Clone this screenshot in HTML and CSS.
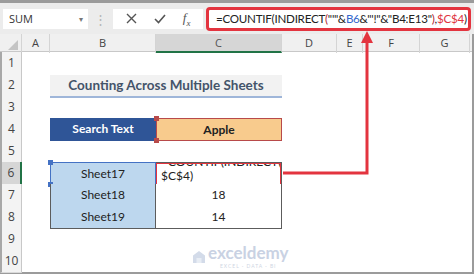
FILE: index.html
```html
<!DOCTYPE html>
<html lang="en">
<head>
    <meta charset="UTF-8">
    <meta name="viewport" content="width=device-width, initial-scale=1.0">
    <title>Counting Across Multiple Sheets</title>
    <link rel="stylesheet" href="styles.css">
</head>
<body>
    <div class="app">
        <div class="topstrip"></div>
        <div class="fbar">
            <div class="namebox">
                <span>SUM</span>
                <span class="caret">&#9662;</span>
            </div>
            <div class="dots">&#8942;</div>
            <div class="fbuttons">
                <svg width="11" height="11" viewBox="0 0 11 11"><path d="M1 1 L10 10 M10 1 L1 10" stroke="#555" stroke-width="1.4" fill="none"/></svg>
                <svg width="12" height="10" viewBox="0 0 12 10"><path d="M1 5 L4.5 8.5 L11 1" stroke="#555" stroke-width="1.6" fill="none"/></svg>
                <span class="fx"><i>f</i><sub>x</sub></span>
            </div>
            <div class="formula">=COUNTIF(INDIRECT<span class="paren">(</span>"'"&amp;<span class="ref-b">B6</span>&amp;"'!"&amp;"B4:E13"<span class="paren">)</span>,<span class="ref-c">$C$4</span>)</div>
        </div>

        <div class="sheet">
            <div class="row colheads">
                <div class="corner"><span class="tri"></span></div>
                <div class="ch">A</div>
                <div class="ch">B</div>
                <div class="ch active">C</div>
                <div class="ch">D</div>
                <div class="ch">E</div>
                <div class="ch">F</div>
                <div class="ch">G</div>
            </div>

            <div class="row"><div class="rh">1</div></div>
            <div class="row">
                <div class="rh">2</div>
                <div></div>
                <div class="title">Counting Across Multiple Sheets</div>
            </div>
            <div class="row"><div class="rh">3</div></div>
            <div class="row">
                <div class="rh">4</div>
                <div></div>
                <div class="cell search">Search Text</div>
                <div class="cell apple">Apple</div>
            </div>
            <div class="row"><div class="rh">5</div></div>
            <div class="row">
                <div class="rh active">6</div>
                <div></div>
                <div class="cell sheetname first picked">Sheet17</div>
                <div class="cell num first formula-cell">
                    <span class="wrapped">=COUNTIF(INDIRECT("'"&amp;B6&amp;"'!"&amp;"B4:E13"),</span>
                    <span class="tail">$C$4)</span>
                </div>
            </div>
            <div class="row">
                <div class="rh">7</div>
                <div></div>
                <div class="cell sheetname">Sheet18</div>
                <div class="cell num">18</div>
            </div>
            <div class="row">
                <div class="rh">8</div>
                <div></div>
                <div class="cell sheetname">Sheet19</div>
                <div class="cell num">14</div>
            </div>
            <div class="row"><div class="rh">9</div></div>
            <div class="row"><div class="rh">10</div></div>

            <div class="watermark">
                <svg width="14" height="14" viewBox="0 0 14 14"><path d="M7 1 L13 5.5 L13 13 L1 13 L1 5.5 Z" fill="#d3dbe9"/><path d="M4.5 13 L4.5 8 L9.5 8 L9.5 13 Z" fill="#e8edf4"/></svg>
                <div>
                    <div class="wm-name">exceldemy</div>
                    <div class="wm-sub">EXCEL · DATA · BI</div>
                </div>
            </div>
        </div>

        <svg class="arrow" width="474" height="274" viewBox="0 0 474 274">
            <path d="M283 173 L367 173 L367 40" stroke="#e3343f" stroke-width="3" fill="none"/>
            <path d="M367 31 L361 43 L373 43 Z" fill="#e3343f"/>
        </svg>
    </div>
</body>
</html>
```

FILE: styles.css
```css
body {
    margin: 0;
    padding: 0;
    font-family: Lato, "Open Sans", sans-serif;
}
.app {
    position: relative;
    width: 474px;
    height: 274px;
    overflow: hidden;
    background: #e8e8e8;
}
.topstrip {
    height: 3px;
    background: #9b9b9b;
}
.fbar {
    height: 31px;
    display: flex;
    align-items: center;
    padding-left: 3px;
    background: #ececec;
}
.namebox {
    width: 85px;
    height: 20px;
    box-sizing: border-box;
    background: white;
    display: flex;
    align-items: center;
    justify-content: space-between;
    padding: 0 5px 0 6px;
    font-family: "Open Sans", sans-serif;
    font-size: 11px;
    color: #333;
}
.caret {
    font-size: 8px;
    color: #777;
}
.dots {
    width: 25px;
    text-align: center;
    color: #b5b5b5;
    font-size: 13px;
}
.fbuttons {
    width: 90px;
    height: 20px;
    background: white;
    display: flex;
    align-items: center;
    justify-content: space-around;
    padding: 0 4px;
    box-sizing: border-box;
}
.fx {
    font-family: "Liberation Serif", serif;
    font-size: 13px;
    color: #555;
}
.fx sub {
    font-size: 9px;
    font-style: italic;
}
.formula {
    margin-left: 3px;
    width: 265px;
    height: 24px;
    box-sizing: border-box;
    border: 3px solid #e3343f;
    border-radius: 4px;
    background: white;
    padding-left: 7px;
    font-size: 11.6px;
    letter-spacing: -0.25px;
    line-height: 18px;
    white-space: nowrap;
    overflow: hidden;
    color: #222;
}
.paren { color: #b3262e; }
.ref-b { color: #3366cc; }
.ref-c { color: #e0343f; }

.sheet {
    position: relative;
    background: white;
    height: 238px;
    border-right: 2px solid #9b9b9b;
    border-bottom: 2px solid #9b9b9b;
}
.row {
    display: grid;
    grid-template-columns: 22px 28px 106px 126px 55px 26px 57px 50px;
    height: 22px;
}
.colheads {
    height: 18px;
    background: #f0f0f0;
    border-bottom: 1px solid #c8c8c8;
    box-sizing: border-box;
}
.corner {
    display: flex;
    align-items: flex-end;
    justify-content: flex-end;
    padding: 0 3px 3px 0;
    border-right: 1px solid #d4d4d4;
}
.tri {
    width: 0;
    height: 0;
    border-left: 10px solid transparent;
    border-bottom: 10px solid #c4c4c4;
}
.ch {
    font-family: "Open Sans", sans-serif;
    font-size: 11px;
    color: #444;
    text-align: center;
    line-height: 17px;
    border-right: 1px solid #d4d4d4;
}
.ch.active {
    background: #d6d6d6;
    border-bottom: 2px solid #217346;
    color: #555;
}
.rh {
    font-family: "Open Sans", sans-serif;
    font-size: 12px;
    color: #444;
    text-align: center;
    line-height: 22px;
    background: #f3f3f3;
    border-left: 2px solid #a8a8a8;
    border-right: 1px solid #c8c8c8;
    border-bottom: 1px solid #dadada;
    box-sizing: border-box;
}
.rh.active {
    background: #d6d6d6;
    border-right: 2px solid #217346;
}
.title {
    grid-column: 3 / 5;
    background: #f2f2f2;
    border-bottom: 2px solid #9fb6d9;
    margin-top: 1px;
    text-align: center;
    font-weight: bold;
    font-size: 13.5px;
    line-height: 21px;
    color: #44546a;
}
.cell {
    position: relative;
    box-sizing: border-box;
    text-align: center;
    font-size: 12px;
    line-height: 21px;
    color: #222;
}
.search {
    background: #2f5597;
    color: white;
    font-weight: bold;
}
.apple {
    background: #f8cb8d;
    font-weight: bold;
    border: 1px solid #b84a4a;
}
.apple::before,
.apple::after {
    content: "";
    position: absolute;
    left: -3px;
    width: 5px;
    height: 5px;
    background: #b84a4a;
}
.apple::before { top: -3px; }
.apple::after { bottom: -3px; }
.sheetname {
    background: #bdd7ee;
    border-left: 1px solid #5c5c5c;
    border-right: 1px solid #5c5c5c;
    border-bottom: 1px solid #5c5c5c;
}
.num {
    background: white;
    border-right: 1px solid #5c5c5c;
    border-bottom: 1px solid #5c5c5c;
}
.first {
    border-top: 1px solid #5c5c5c;
}
.picked {
    border: 1px solid #4472c4;
}
.picked::before,
.picked::after {
    content: "";
    position: absolute;
    left: -3px;
    width: 5px;
    height: 5px;
    background: #4472c4;
}
.picked::before { top: -3px; }
.picked::after { bottom: -3px; }
.formula-cell {
    display: flex;
    flex-direction: column;
    justify-content: flex-end;
    text-align: left;
    overflow: hidden;
    padding: 0 0 1px 5px;
}
.formula-cell .wrapped {
    white-space: nowrap;
    line-height: 14px;
    flex-shrink: 0;
}
.formula-cell .tail {
    line-height: 14px;
    flex-shrink: 0;
}
.formula-cell::after {
    content: "";
    position: absolute;
    left: -2px;
    right: -2px;
    top: -2px;
    bottom: -3px;
    border: 3px solid #e3343f;
    border-radius: 2px;
}
.watermark {
    position: absolute;
    left: 192px;
    top: 210px;
    display: flex;
    align-items: center;
    gap: 2px;
}
.wm-name {
    font-size: 17px;
    font-weight: bold;
    color: #c9d2e3;
    line-height: 17px;
}
.wm-sub {
    margin-top: 2px;
    font-size: 5px;
    line-height: 6px;
    color: #cfd6e3;
    letter-spacing: 1px;
    text-align: center;
}
.arrow {
    position: absolute;
    left: 0;
    top: 0;
    pointer-events: none;
}
```
